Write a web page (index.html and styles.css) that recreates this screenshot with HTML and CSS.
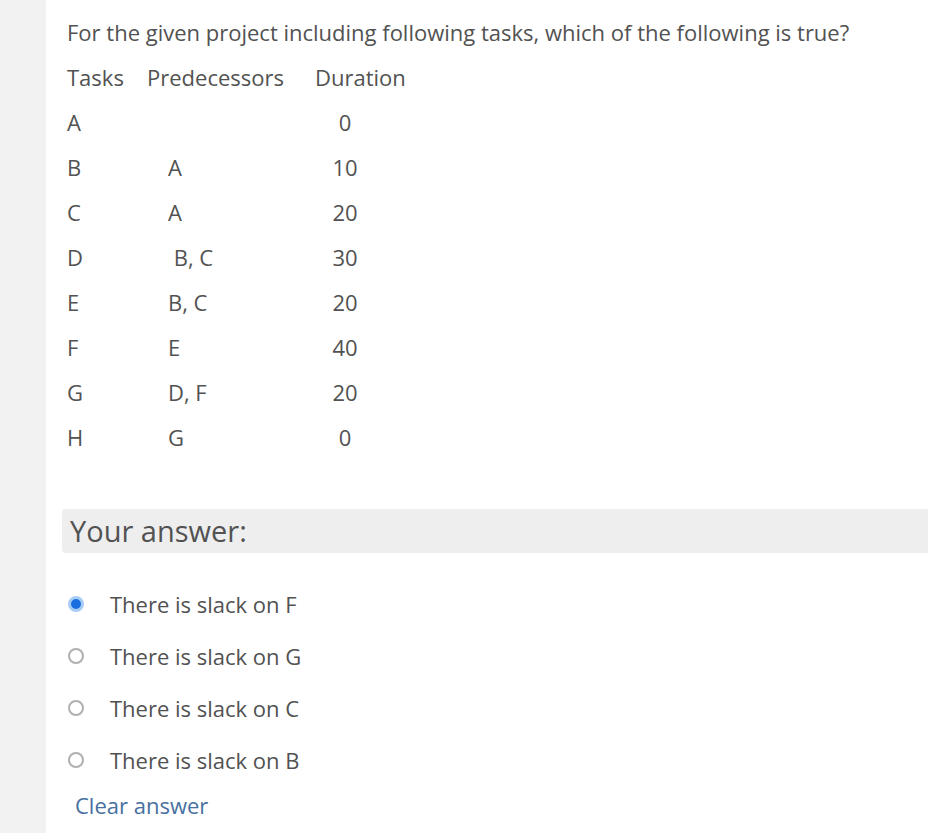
FILE: index.html
```html
<!DOCTYPE html>
<html lang="en">
<head>
  <meta charset="UTF-8">
  <title>Question</title>
  <link rel="stylesheet" href="styles.css">
</head>
<body>
  <aside class="side-strip"></aside>
  <main class="question">
    <p class="prompt">For the given project including following tasks, which of the following is true?</p>

    <div class="task-table">
      <div class="row head">
        <span class="c-task">Tasks</span>
        <span class="c-pred">Predecessors</span>
        <span class="c-dur">Duration</span>
      </div>
      <div class="row"><span class="c-task">A</span><span class="c-pred"></span><span class="c-dur">0</span></div>
      <div class="row"><span class="c-task">B</span><span class="c-pred">A</span><span class="c-dur">10</span></div>
      <div class="row"><span class="c-task">C</span><span class="c-pred">A</span><span class="c-dur">20</span></div>
      <div class="row"><span class="c-task">D</span><span class="c-pred">&nbsp;B, C</span><span class="c-dur">30</span></div>
      <div class="row"><span class="c-task">E</span><span class="c-pred">B, C</span><span class="c-dur">20</span></div>
      <div class="row"><span class="c-task">F</span><span class="c-pred">E</span><span class="c-dur">40</span></div>
      <div class="row"><span class="c-task">G</span><span class="c-pred">D, F</span><span class="c-dur">20</span></div>
      <div class="row"><span class="c-task">H</span><span class="c-pred">G</span><span class="c-dur">0</span></div>
    </div>

    <h2 class="answer-bar">Your answer:</h2>

    <div class="options">
      <label class="option"><span class="radio checked"></span>There is slack on F</label>
      <label class="option"><span class="radio"></span>There is slack on G</label>
      <label class="option"><span class="radio"></span>There is slack on C</label>
      <label class="option"><span class="radio"></span>There is slack on B</label>
    </div>

    <a class="clear-link" href="#">Clear answer</a>
  </main>
</body>
</html>
```
FILE: styles.css
```css
/* General styles */
body {
  margin: 0;
  padding: 0;
  font-family: 'Open Sans', sans-serif;
  color: #525252;
  background: #ffffff;
  display: flex;
  min-height: 833px;
  overflow: hidden;
}

.side-strip {
  width: 46px;
  flex-shrink: 0;
  background-color: #f2f2f2;
}

.question {
  flex-grow: 1;
  padding: 10px 0 0 21px;
}

.prompt {
  margin: 0;
  font-size: 22px;
  line-height: 45px;
  white-space: nowrap;
}

/* Task table */
.task-table {
  font-size: 22px;
}

.row {
  display: grid;
  grid-template-columns: 100px 158px 40px;
  height: 45px;
  line-height: 45px;
  white-space: nowrap;
}

.row .c-pred {
  padding-left: 1px;
}

.row .c-dur {
  display: flex;
  justify-content: center;
}

.row.head {
  grid-template-columns: 80px 168px 120px;
}

.row.head .c-pred {
  padding-left: 0;
}

.row.head .c-dur {
  justify-content: flex-start;
}

/* Answer area */
.answer-bar {
  margin: 49px 0 0 -5px;
  padding-left: 8px;
  height: 44px;
  line-height: 44px;
  font-size: 29px;
  font-weight: normal;
  background-color: #eeeeee;
  border-radius: 4px 0 0 4px;
}

.options {
  margin-top: 25px;
}

.option {
  display: flex;
  align-items: center;
  height: 52px;
  font-size: 22px;
}

.radio {
  width: 12px;
  height: 12px;
  border: 2px solid #b0b0b0;
  border-radius: 50%;
  margin-left: 1px;
  margin-right: 26px;
  box-sizing: content-box;
  flex-shrink: 0;
}

.radio.checked {
  width: 10px;
  height: 10px;
  border: 3px solid #a7ccf5;
  background-color: #1a6fe0;
  box-shadow: inset 0 0 0 1px #1a6fe0;
}

.clear-link {
  display: block;
  margin: 1px 0 0 8px;
  line-height: 36px;
  font-size: 22px;
  color: #46709f;
  text-decoration: none;
}
```
